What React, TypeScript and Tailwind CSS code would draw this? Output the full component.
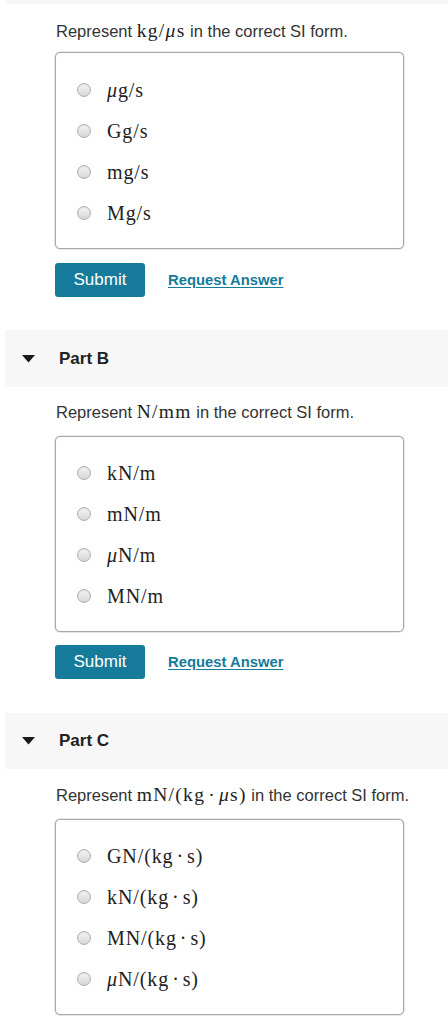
import React from "react";

const sans = { fontFamily: '"Liberation Sans", Arial, sans-serif' };

function Radio() {
  return (
    <span className="inline-block w-[14px] h-[14px] rounded-full border border-[#b0b0b0] bg-linear-to-b from-[#f5f5f5] to-[#d6d6d6] shadow-[inset_0_1px_1px_rgba(0,0,0,0.08)]" />
  );
}

function M({ children }: { children: React.ReactNode }) {
  return (
    <span className="font-['Liberation_Serif',serif] text-[19.5px] tracking-[1.3px] leading-[20px] text-[#222]">
      {children}
    </span>
  );
}
function I({ children }: { children: React.ReactNode }) {
  return <span className="italic">{children}</span>;
}
function Dot() {
  return <span className="mx-[3px]">·</span>;
}

function Options({ items, pt }: { items: React.ReactNode[]; pt: string }) {
  return (
    <div className={`ml-[55px] mr-[44px] border border-[#a8a8a8] rounded-[5px] pb-[15px] shadow-[0_0_0_0.5px_#cfcfcf] bg-white ${pt}`}>
      {items.map((it, i) => (
        <div key={i} className="h-[41px] flex items-center pl-[21px]">
          <Radio />
          <span className="ml-[16px] text-[20px] text-[#222] font-['Liberation_Serif',serif] tracking-[0.9px]">
            {it}
          </span>
        </div>
      ))}
    </div>
  );
}

function Buttons() {
  return (
    <div className="ml-[55px] flex items-center">
      <button className="w-[90px] h-[34px] rounded-[3px] bg-[#167b9a] text-white text-[17px]" style={sans}>
        Submit
      </button>
      <a className="ml-[23px] text-[14.8px] font-bold text-[#167b9a] underline underline-offset-[2px]" style={sans}>
        Request Answer
      </a>
    </div>
  );
}

function Header({ label, h }: { label: string; h: string }) {
  return (
    <div className={`ml-[5px] bg-[#f7f7f7] flex items-center ${h}`}>
      <svg width="14" height="8" viewBox="0 0 14 8" className="ml-[17px]">
        <polygon points="0,0 13,0 6.5,7.5" fill="#1a1a1a" />
      </svg>
      <span className="ml-[23px] text-[17px] font-bold text-[#222]" style={sans}>
        {label}
      </span>
    </div>
  );
}

function Question({ children }: { children: React.ReactNode }) {
  return (
    <div className="ml-[56px] h-[20px] leading-[20px] text-[16.5px] text-[#333] whitespace-nowrap" style={sans}>
      {children}
    </div>
  );
}

export default function App() {
  return (
    <div className="w-[448px] h-[1024px] bg-white overflow-hidden" style={sans}>
      <div className="ml-[5px] h-[4px] bg-[#f7f7f7]" />
      <div className="mt-[17px]">
        <Question>
          Represent <M>kg/<I>μ</I>s</M> in the correct SI form.
        </Question>
      </div>
      <div className="mt-[11px]">
        <Options
          pt="pt-[16px]"
          items={[
            <><I>μ</I>g/s</>,
            <>Gg/s</>,
            <>mg/s</>,
            <>Mg/s</>,
          ]}
        />
      </div>
      <div className="mt-[14px]">
        <Buttons />
      </div>

      <div className="mt-[33px]">
        <Header label="Part B" h="h-[57px]" />
      </div>
      <div className="mt-[15px]">
        <Question>
          Represent <M>N/mm</M> in the correct SI form.
        </Question>
      </div>
      <div className="mt-[14px]">
        <Options
          pt="pt-[15px]"
          items={[
            <>kN/m</>,
            <>mN/m</>,
            <><I>μ</I>N/m</>,
            <>MN/m</>,
          ]}
        />
      </div>
      <div className="mt-[13px]">
        <Buttons />
      </div>

      <div className="mt-[34px]">
        <Header label="Part C" h="h-[56px]" />
      </div>
      <div className="mt-[16px]">
        <Question>
          Represent <M>mN/(kg<Dot /><I>μ</I>s)</M> in the correct SI form.
        </Question>
      </div>
      <div className="mt-[14px]">
        <Options
          pt="pt-[15px]"
          items={[
            <>GN/(kg<Dot />s)</>,
            <>kN/(kg<Dot />s)</>,
            <>MN/(kg<Dot />s)</>,
            <><I>μ</I>N/(kg<Dot />s)</>,
          ]}
        />
      </div>
    </div>
  );
}
